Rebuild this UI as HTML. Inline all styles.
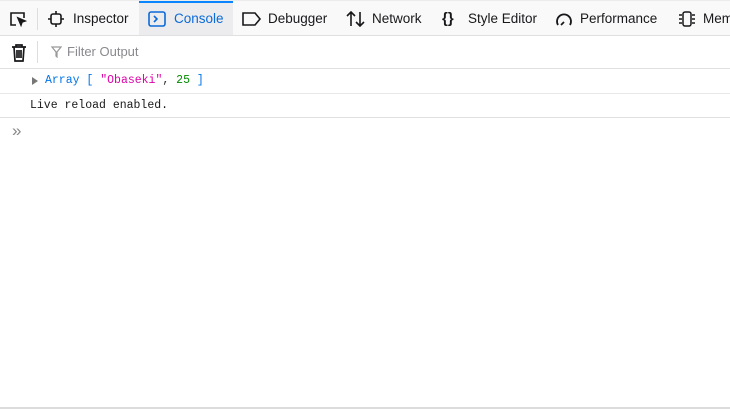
<!DOCTYPE html>
<html><head><style>
*{margin:0;padding:0;box-sizing:border-box}
body{width:730px;height:411px;background:#fff;font-family:"Liberation Sans",sans-serif;position:relative;overflow:hidden}
.tb{position:absolute;left:0;top:0;width:730px;height:36px;background:#f9f9fa;border-bottom:1px solid #e0e0e2;border-top:1px solid #ececec}
.tab{position:absolute;top:0;height:34px;font-size:13.5px;color:#18181a;line-height:36px;white-space:nowrap}
.tab svg{position:absolute;top:10px}
.sel{background:#ececee;border-top:2px solid #0a84ff;color:#0a6ad8;line-height:32px}
.sel svg{top:8px}
.fb{position:absolute;top:36px;left:0;width:730px;height:33px;border-bottom:1px solid #e0e0e2}
.mono{font-family:"Liberation Mono",monospace;font-size:11.5px;position:absolute}
.row{position:absolute;left:0;width:730px;border-bottom:1px solid #e8e8ea}
</style></head><body>
<div class="tb">
<svg style="position:absolute;left:9px;top:10px" width="18" height="16" viewBox="0 0 18 16" fill="none" stroke="#18181a" stroke-width="1.6"><path d="M7 14H2V2h13v5"/><path d="M9 7l7 3-3 1-1 3z" fill="#18181a"/></svg>
<div style="position:absolute;left:37px;top:7px;width:1px;height:22px;background:#ddd"></div>
<div class="tab" style="left:48px;padding-left:25px">Inspector<svg style="left:0" width="16" height="16" viewBox="0 0 16 16" fill="none" stroke="#18181a" stroke-width="1.6"><rect x="3" y="3" width="10" height="10" rx="2"/><path d="M8 0v3M8 13v3M0 8h3M13 8h3"/></svg></div>
<div class="tab sel" style="left:139px;width:94px;padding-left:35px">Console<svg style="left:9px" width="18" height="16" viewBox="0 0 18 16" fill="none" stroke="#0a6ad8" stroke-width="1.6"><rect x="1" y="1" width="16" height="14" rx="2"/><path d="M6 5l3 3-3 3"/></svg></div>
<div class="tab" style="left:242px;padding-left:26px">Debugger<svg style="left:0" width="20" height="16" viewBox="0 0 20 16" fill="none" stroke="#18181a" stroke-width="1.6"><path d="M1 2h12l5 6-5 6H1z"/></svg></div>
<div class="tab" style="left:346px;padding-left:26px">Network<svg style="left:0" width="20" height="16" viewBox="0 0 20 16" fill="none" stroke="#18181a" stroke-width="1.6"><path d="M5 15V1M1 5l4-4 4 4M14 1v14M10 11l4 4 4-4"/></svg></div>
<div class="tab" style="left:442px;padding-left:26px">Style Editor<span style="position:absolute;left:0;top:0;font-weight:bold;font-size:15px">{}</span></div>
<div class="tab" style="left:554px;padding-left:26px">Performance<svg style="left:0" width="20" height="16" viewBox="0 0 20 16" fill="none" stroke="#18181a" stroke-width="1.8"><path d="M4 14A7 7 0 1 1 16 14"/><path d="M10 11l-3 3" /></svg></div>
<div class="tab" style="left:677px;padding-left:26px">Memory<svg style="left:0" width="20" height="16" viewBox="0 0 20 16" fill="none" stroke="#18181a" stroke-width="1.5"><rect x="6" y="1" width="8" height="14" rx="2"/><path d="M2 4h3M2 8h3M2 12h3M15 4h3M15 8h3M15 12h3"/></svg></div>
</div>
<div class="fb">
<svg style="position:absolute;left:11px;top:8px" width="16" height="18" viewBox="0 0 16 18" fill="none" stroke="#18181a" stroke-width="1.7"><path d="M1 3h14M5 3V1h6v2M3 3l1 14h8l1-14M6 6v8M8 6v8M10 6v8"/></svg>
<div style="position:absolute;left:37px;top:5px;width:1px;height:22px;background:#ddd"></div>
<svg style="position:absolute;left:51px;top:10px" width="11" height="12" viewBox="0 0 11 12" fill="none" stroke="#999" stroke-width="1.2"><path d="M1 1h9L6 6v5L5 10V6z"/></svg>
<span style="position:absolute;left:67px;top:8px;font-size:13px;color:#8a8a8e">Filter Output</span>
</div>
<div class="row" style="top:69px;height:25px">
<svg style="position:absolute;left:32px;top:8px" width="6" height="8"><path d="M0 0l6 4-6 4z" fill="#777"/></svg>
<span class="mono" style="left:45px;top:5px;color:#0074e8">Array <span style="color:#0074e8">[</span> <span style="color:#dd00a9">"Obaseki"</span><span style="color:#333">,</span> <span style="color:#058b00">25</span> ]</span>
</div>
<div class="row" style="top:94px;height:24px;border-bottom-color:#e0e0e2">
<span class="mono" style="left:30px;top:5px;color:#18181a">Live reload enabled.</span>
</div>
<span style="position:absolute;left:12px;top:121px;font-size:17px;color:#888">»</span>
<div style="position:absolute;left:0;top:407px;width:730px;height:2px;background:#dcdcdc"></div>
</body></html>
